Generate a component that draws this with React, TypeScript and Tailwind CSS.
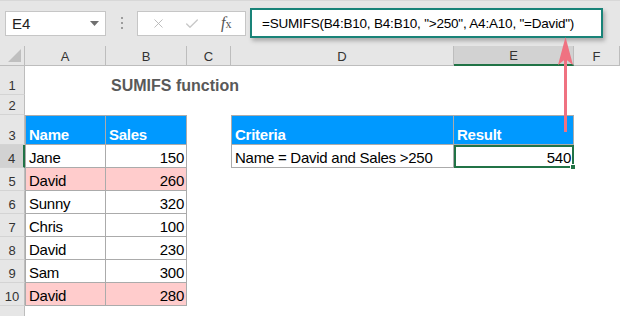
import { X, Check } from 'lucide-react';

const COLS = ['A', 'B', 'C', 'D', 'E', 'F'];

const gridLine = 'border-[#ababab]';

function RowHead({ n, active, cut }: { n: number; active?: boolean; cut?: boolean }) {
  return (
    <div
      className={
        'flex justify-center text-[13px] text-[#333] overflow-hidden ' +
        (cut ? 'items-start pt-[6px] ' : 'items-end border-b border-[#d4d4d4] ') +
        (active ? 'bg-[#d2d2d2] border-r-2 border-r-[#217346]' : 'bg-[#e6e6e6] border-r border-r-[#bdbdbd]')
      }
    >
      {n}
    </div>
  );
}

function Blank() {
  return <div />;
}

function Cell({
  text,
  pink,
  head,
  right,
  left,
}: {
  text: string;
  pink?: boolean;
  head?: boolean;
  right?: boolean;
  left?: boolean;
}) {
  return (
    <div
      className={
        'flex items-end pb-[1px] border-r border-b whitespace-nowrap tracking-[-0.25px] ' +
        gridLine +
        (left ? ' border-l' : '') +
        (right ? ' justify-end pr-[2px]' : ' pl-[3px]') +
        (head ? ' bg-[#0099ff] text-white font-bold border-t' : pink ? ' bg-[#ffcccc]' : ' bg-white')
      }
    >
      {text}
    </div>
  );
}

function DataRow({ n, name, val, pink }: { n: number; name: string; val: string; pink: boolean }) {
  const first = n === 4;
  return (
    <>
      <RowHead n={n} active={first} />
      <Cell text={name} pink={pink} left />
      <Cell text={val} pink={pink} right />
      <Blank />
      {first ? <Cell text="Name = David and Sales >250" left /> : <Blank />}
      {first ? (
        <div className="relative flex items-end justify-end pr-[1px] pb-0 border-2 border-[#217346] bg-white tracking-[-0.25px]">
          540
          <span className="absolute right-[-4px] bottom-[-4px] w-[6px] h-[6px] bg-[#217346] border border-white" />
        </div>
      ) : (
        <Blank />
      )}
      <Blank />
    </>
  );
}

export default function App() {
  const sales: [string, string, boolean][] = [
    ['Jane', '150', false],
    ['David', '260', true],
    ['Sunny', '320', false],
    ['Chris', '100', false],
    ['David', '230', false],
    ['Sam', '300', false],
    ['David', '280', true],
  ];

  return (
    <div className="relative w-[620px] h-[316px] overflow-hidden bg-white font-['Liberation_Sans',Arial,sans-serif] text-[15px] leading-[17px] text-black">
      {/* formula bar */}
      <div className="flex items-start h-[46px] bg-[#e6e6e6] border-t border-[#d8d8d8]">
        <div className="mt-[10px] ml-[5px] w-[101px] h-[25px] bg-white border border-[#c6c6c6] flex items-center justify-between pl-[6px] pr-[6px]">
          <span className="text-[15px] text-[#222]">E4</span>
          <svg width="9" height="5" viewBox="0 0 9 5">
            <path d="M0 0 L9 0 L4.5 5 Z" fill="#6f6f6f" />
          </svg>
        </div>
        <div className="mt-[16px] w-[31px] flex flex-col items-center gap-[3px]">
          <span className="w-[2px] h-[2px] bg-[#9c9c9c]" />
          <span className="w-[2px] h-[2px] bg-[#9c9c9c]" />
          <span className="w-[2px] h-[2px] bg-[#9c9c9c]" />
        </div>
        <div className="mt-[10px] w-[109px] h-[25px] bg-white border border-[#c6c6c6] flex items-center pl-[13px]">
          <X size={15} strokeWidth={1.4} className="text-[#b4b4b4]" />
          <Check size={16} strokeWidth={2} className="ml-[18px] text-[#c8c8c8]" />
          <span className="ml-[21px] font-['Liberation_Serif',serif] italic text-[16px] text-[#555]">
            f<span className="text-[12px] not-italic">x</span>
          </span>
        </div>
        <div className="mt-[7px] ml-[4px] w-[353px] h-[30px] bg-white border-2 border-[#198378] shadow-[2px_3px_4px_rgba(0,0,0,0.25)] flex items-center pl-[10px] whitespace-nowrap text-[13.5px] tracking-[-0.2px]">
          =SUMIFS(B4:B10, B4:B10, "&gt;250", A4:A10, "=David")
        </div>
      </div>

      {/* sheet */}
      <div className="grid grid-cols-[25px_81px_81px_44px_223px_120px_1fr] grid-rows-[20px_29px_20px_30px_repeat(7,23px)_10px]">
        {/* column headers */}
        <div className="bg-[#e6e6e6] border-r border-b border-[#bdbdbd] flex items-end justify-end p-[3px]">
          <svg width="13" height="13" viewBox="0 0 13 13">
            <path d="M13 0 L13 13 L0 13 Z" fill="#bfbfbf" />
          </svg>
        </div>
        {COLS.map((c) => (
          <div
            key={c}
            className={
              'flex items-end justify-center text-[13px] text-[#333] ' +
              (c === 'E'
                ? 'bg-[#d2d2d2] border-b-2 border-[#217346] border-r border-r-[#bdbdbd]'
                : 'bg-[#e6e6e6] border-b border-[#bdbdbd] border-r')
            }
          >
            {c}
          </div>
        ))}

        {/* row 1 */}
        <RowHead n={1} />
        <Blank />
        <div className="flex items-end pb-[1px] pl-[5px] whitespace-nowrap font-bold text-[16px] text-[#595959]">
          SUMIFS function
        </div>
        <Blank />
        <Blank />
        <Blank />
        <Blank />

        {/* row 2 */}
        <RowHead n={2} />
        <Blank />
        <Blank />
        <Blank />
        <Blank />
        <Blank />
        <Blank />

        {/* row 3 */}
        <RowHead n={3} />
        <Cell text="Name" head left />
        <Cell text="Sales" head />
        <Blank />
        <Cell text="Criteria" head left />
        <Cell text="Result" head />
        <Blank />

        {sales.map(([name, val, pink], i) => (
          <DataRow key={i} n={i + 4} name={name} val={val} pink={pink} />
        ))}

        {/* row 11 */}
        <RowHead n={11} cut />
        <Blank />
        <Blank />
        <Blank />
        <Blank />
        <Blank />
        <Blank />
      </div>

      {/* arrow pointing at the formula */}
      <svg className="absolute left-[556px] top-[37px]" width="20" height="95" viewBox="0 0 20 95">
        <rect x="8" y="14" width="3" height="81" fill="#ef7281" />
        <path d="M9.5 0 L17 28 L9.5 22 L2 28 Z" fill="#ef7281" />
      </svg>
    </div>
  );
}
